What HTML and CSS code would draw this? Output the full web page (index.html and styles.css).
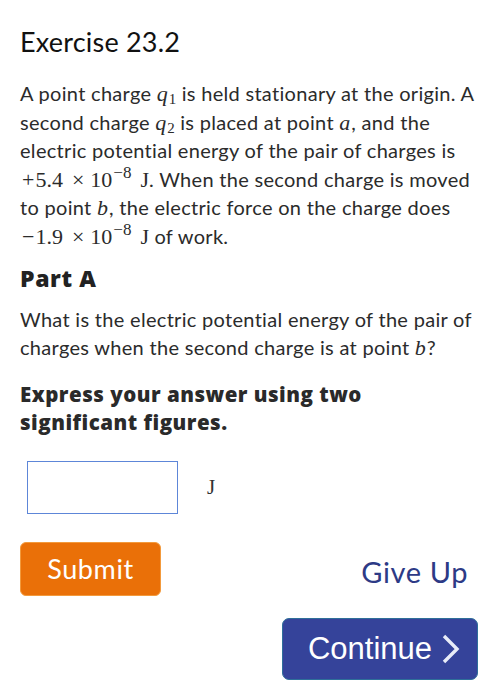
FILE: index.html
```html
<!DOCTYPE html>
<html>
<head>
<meta charset="utf-8">
<link rel="stylesheet" href="styles.css">
</head>
<body>
<div class="page">
  <h1 class="title">Exercise 23.2</h1>
  <p class="text">A point charge <span class="m"><i>q</i><sub>1</sub></span> is held stationary at the origin. A<br>second charge <span class="m"><i>q</i><sub>2</sub></span> is placed at point <span class="m"><i>a</i></span>, and the<br>electric potential energy of the pair of charges is<br><span class="m"><span class="sg">+</span>5.4<span class="op">×</span>10<sup>−8</sup>J</span>. When the second charge is moved<br>to point <span class="m"><i>b</i></span>, the electric force on the charge does<br><span class="m"><span class="sg">−</span>1.9<span class="op">×</span>10<sup>−8</sup>J</span> of work.</p>
  <h2 class="part">Part A</h2>
  <p class="text q">What is the electric potential energy of the pair of<br>charges when the second charge is at point <span class="m"><i>b</i></span>?</p>
  <p class="instr">Express your answer using two<br>significant figures.</p>
  <div class="answer">
    <div class="box"></div>
    <span class="unit">J</span>
  </div>
  <div class="actions">
    <button class="submit">Submit</button>
    <span class="giveup">Give Up</span>
  </div>
  <div class="cont-row">
    <button class="continue">Continue <svg class="chev" width="20" height="32" viewBox="0 0 20 32"><path d="M4 3 L17 16 L4 29" fill="none" stroke="#e8ecf8" stroke-width="3.4"/></svg></button>
  </div>
</div>
</body>
</html>
```
FILE: styles.css
```css
html, body { margin: 0; padding: 0; background: #fff; }
body { font-family: Lato, "Open Sans", sans-serif; color: #2b2b2b; }
.page { padding: 24px 10px 0 20px; }
.title { font-weight: 400; font-size: 27px; line-height: 36px; margin: 0 0 19px 0; color: #111; letter-spacing: 0.2px; }
.text { font-size: 20px; line-height: 28.6px; margin: 0; letter-spacing: 0.3px; white-space: nowrap; }
.m { font-family: "Liberation Serif", serif; font-size: 22px; line-height: 1; letter-spacing: 0; }
.m i { margin-right: 1px; }
.sg { margin-right: 1px; margin-left: 2px; }
.op { margin: 0 6px 0 9px; }
.m sub, .m sup { line-height: 0; }
.m sub { font-size: 15px; vertical-align: -3px; }
.m sup { font-size: 17px; vertical-align: 9px; margin-left: 1px; margin-right: 9px; }
.part { font-family: "Open Sans", sans-serif; font-size: 23px; font-weight: 800; margin: 12px 0 12px 0; line-height: 30px; letter-spacing: 0.6px; color: #222; }
.q { margin-bottom: 18px; }
.instr { font-family: "Open Sans", sans-serif; font-size: 20.5px; font-weight: 800; line-height: 28.6px; margin: 0; letter-spacing: 0.5px; color: #2a2a2a; }
.answer { display: flex; align-items: center; margin: 24px 0 0 7px; }
.box { width: 149px; height: 51px; border: 1px solid #5d86d8; }
.unit { font-family: "Liberation Serif", serif; font-size: 21px; margin-left: 29px; color: #333; }
.actions { display: flex; justify-content: space-between; align-items: center; margin-top: 28px; padding-right: 21px; }
.submit { background: #ea7008; color: #fff; border: 1px solid #f39a3c; border-radius: 6px; width: 141px; height: 54px; font-family: Lato, sans-serif; font-size: 27px; padding: 0; letter-spacing: 0.6px; }
.giveup { color: #2d3a86; font-size: 29px; margin-top: 6px; letter-spacing: 0.6px; }
.cont-row { display: flex; justify-content: flex-end; margin-top: 22px; padding-right: 11px; }
.continue { background: #35439a; color: #fff; border: 1px solid #2f6f9a; border-radius: 7px; width: 196px; height: 62px; font-family: "Liberation Sans", Arial, sans-serif; font-size: 31px; padding: 0 0 0 8px; display: flex; align-items: center; justify-content: center; gap: 8px; }
.chev { display: block; }
```
